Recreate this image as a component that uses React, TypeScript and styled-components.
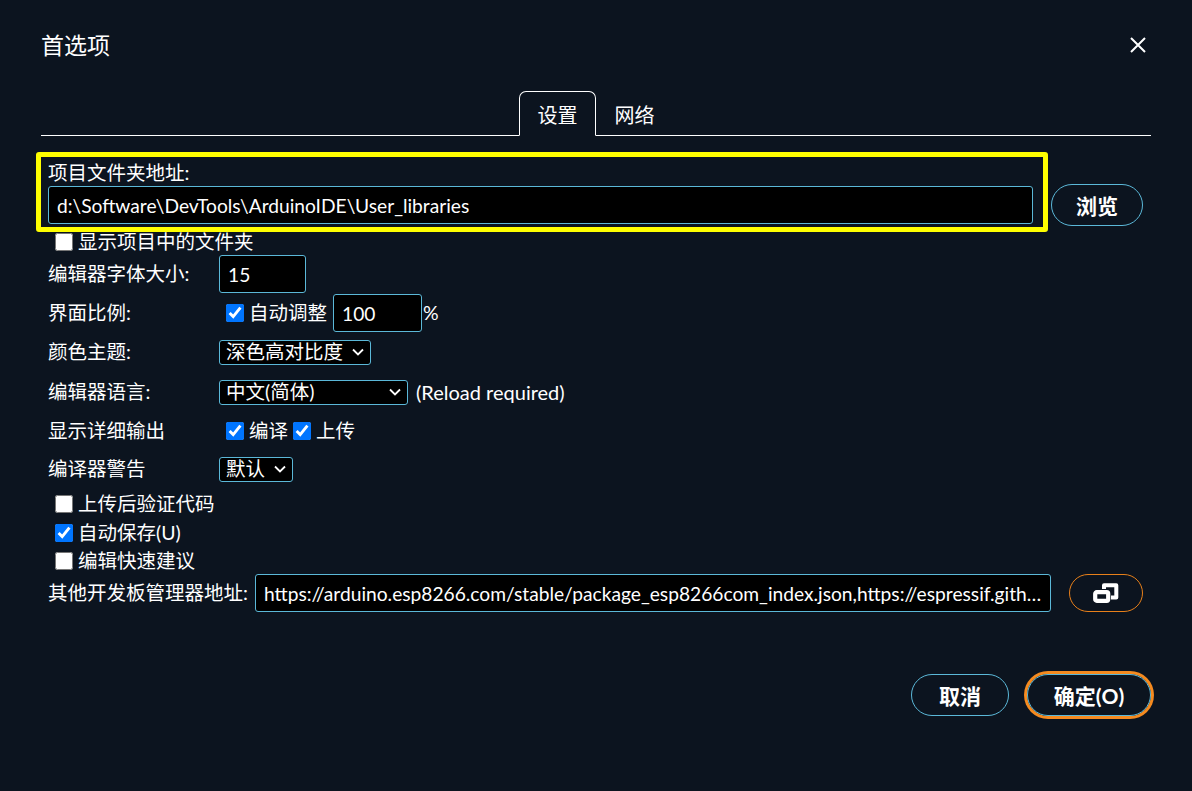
import React from "react";
import styled, { createGlobalStyle } from "styled-components";

const Global = createGlobalStyle`
  html, body { margin: 0; padding: 0; background: #0c141f; }
  body { width: 1192px; height: 791px; overflow: hidden; }
  * { box-sizing: border-box; }
`;
const FONT = `Lato, "Noto Sans CJK SC", sans-serif`;
const CYAN = "#5bb8d8";

const Dialog = styled.div`
  width: 1192px; height: 791px; padding: 26px 41px 0; color: #fff;
  font: 19.5px/24px ${FONT}; background: #0c141f; display: flex; flex-direction: column;
`;
const Header = styled.div`
  display: flex; justify-content: space-between; align-items: center; height: 38px; padding-right: 3px;
`;
const Title = styled.div`font-size: 23px; line-height: 38px;`;
const Close = styled.svg`width: 18px; height: 18px; stroke: #fff; stroke-width: 2; fill: none; margin-right: 1px;`;
const Tabs = styled.div`
  display: flex; justify-content: center; align-items: flex-end; height: 46px; margin-top: 26px; border-bottom: 1px solid #fff;
  width: 1110px;
`;
const Tab = styled.div<{ $active?: boolean }>`
  width: 77px; height: 45px; margin-bottom: -1px; padding-top: 2px; display: flex; align-items: center; justify-content: center; font-size: 20px;
  ${p => p.$active ? `border: 1px solid #fff; border-bottom: 1px solid #0c141f; border-radius: 7px 7px 0 0;` : ""}
`;
const PathRow = styled.div`display: flex; align-items: flex-end; margin: 16px 0 0 -5px; gap: 3px;`;
const Highlight = styled.div`
  width: 1012px; height: 80px; border: 5px solid #ffff00; border-radius: 3px; padding: 3px 10px 0 7px;
`;
const Label = styled.div`line-height: 26px; white-space: nowrap;`;
const TextInput = styled.input<{ $w?: string; $h?: string }>`
  display: block; width: ${p => p.$w || "100%"}; height: ${p => p.$h || "38px"};
  background: #000; color: #fff; border: 1px solid ${CYAN}; border-radius: 3px;
  font: 19.2px ${FONT}; padding: 0 8px; outline: none; text-overflow: ellipsis;
`;
const Pill = styled.button<{ $w: string; $h?: string; $color?: string }>`
  width: ${p => p.$w}; height: ${p => p.$h || "42px"}; border-radius: 22px; background: transparent;
  border: 1px solid ${p => p.$color || CYAN}; color: #fff; font: 700 21px ${FONT};
  display: flex; align-items: center; justify-content: center; padding: 0; flex: none;
`;
const BrowsePill = styled(Pill)`margin-bottom: 6px;`;
const CopyPill = styled(Pill)`margin-left: 18px;`;
const OkPill = styled(Pill)`box-shadow: 0 0 0 3px #f58a1f;`;
const Form = styled.div`display: flex; flex-direction: column; padding-left: 7px;`;
const Row = styled.div<{ $h: number; $top?: number }>`
  display: grid; grid-template-columns: 171px 1fr; align-items: center; height: ${p => p.$h}px; margin-top: ${p => p.$top || 0}px;
`;
const Controls = styled.div`display: flex; align-items: center; gap: 5px;`;
const CheckLine = styled.label<{ $h: number; $top?: number }>`
  display: flex; align-items: center; gap: 5px; height: ${p => p.$h}px; padding-left: 7px; margin-top: ${p => p.$top || 0}px;
`;
const Check = styled.input.attrs({ type: "checkbox", readOnly: true })`
  width: 18px; height: 18px; margin: 0; accent-color: #0075ff; flex: none;
`;
const Boxed = styled.label`display: flex; align-items: center; gap: 5px; margin-left: 7px;`;
const ScaleBox = styled(Boxed)`width: 102px;`;
const InlineBox = styled.label`display: flex; align-items: center; gap: 5px;`;
const Percent = styled.span`margin-left: -4px;`;
const SelectBox = styled.div<{ $w: string }>`
  width: ${p => p.$w}; height: 25px; background: #000; border: 1px solid ${CYAN}; border-radius: 3px;
  display: flex; align-items: center; justify-content: space-between; padding: 0 6px; white-space: nowrap;
`;
const Chevron = styled.svg`width: 12px; height: 8px; stroke: #fff; stroke-width: 1.8; fill: none; flex: none;`;
const Hint = styled.span`margin-left: 3px; font-size: 20px;`;
const UrlRow = styled.div`display: flex; align-items: center; height: 38px; margin-top: -1px;`;
const UrlLabel = styled.div`width: 207px; white-space: nowrap; flex: none;`;
const Footer = styled.div`
  display: flex; justify-content: flex-end; gap: 18px; margin-top: 62px; width: 1110px;
`;

const Chev = () => (
  <Chevron viewBox="0 0 12 8"><path d="M1 1.5 L6 6.5 L11 1.5" /></Chevron>
);

const Sel = ({ w, text }: { w: string; text: string }) => (
  <SelectBox $w={w}><span>{text}</span><Chev /></SelectBox>
);

export default function App() {
  return (
    <Dialog>
      <Global />
      <Header>
        <Title>首选项</Title>
        <Close viewBox="0 0 18 18"><path d="M2 2 L16 16 M16 2 L2 16" /></Close>
      </Header>
      <Tabs>
        <Tab $active>设置</Tab>
        <Tab>网络</Tab>
      </Tabs>
      <PathRow>
        <Highlight>
          <Label>项目文件夹地址:</Label>
          <TextInput readOnly value="d:\Software\DevTools\ArduinoIDE\User_libraries" />
        </Highlight>
        <BrowsePill $w="92px">浏览</BrowsePill>
      </PathRow>
      <Form>
        <CheckLine $h={20}><Check /><span>显示项目中的文件夹</span></CheckLine>
        <Row $h={38} $top={3}>
          <span>编辑器字体大小:</span>
          <TextInput readOnly value="15" $w="87px" />
        </Row>
        <Row $h={38} $top={1}>
          <span>界面比例:</span>
          <Controls>
            <ScaleBox><Check defaultChecked /><span>自动调整</span></ScaleBox>
            <TextInput readOnly value="100" $w="89px" />
            <Percent>%</Percent>
          </Controls>
        </Row>
        <Row $h={38} $top={1}>
          <span>颜色主题:</span>
          <Controls><Sel w="152px" text="深色高对比度" /></Controls>
        </Row>
        <Row $h={38} $top={2}>
          <span>编辑器语言:</span>
          <Controls>
            <Sel w="189px" text="中文(简体)" />
            <Hint>(Reload required)</Hint>
          </Controls>
        </Row>
        <Row $h={38} $top={1}>
          <span>显示详细输出</span>
          <Controls>
            <Boxed><Check defaultChecked /><span>编译</span></Boxed>
            <InlineBox><Check defaultChecked /><span>上传</span></InlineBox>
          </Controls>
        </Row>
        <Row $h={38}>
          <span>编译器警告</span>
          <Controls><Sel w="74px" text="默认" /></Controls>
        </Row>
        <CheckLine $h={28} $top={2}><Check /><span>上传后验证代码</span></CheckLine>
        <CheckLine $h={28} $top={1}><Check defaultChecked /><span>自动保存(U)</span></CheckLine>
        <CheckLine $h={28}><Check /><span>编辑快速建议</span></CheckLine>
        <UrlRow>
          <UrlLabel>其他开发板管理器地址:</UrlLabel>
          <TextInput readOnly $w="796px" value="https://arduino.esp8266.com/stable/package_esp8266com_index.json,https://espressif.github.io/arduino-esp32/package_esp32_index.json" />
          <CopyPill $w="74px" $h="38px" $color="#e8801a">
            <svg width="26" height="20" viewBox="0 0 26 20" fill="none" stroke="#fff" strokeLinejoin="round">
              <path d="M11 6V2.2h12.3v12.3H18" strokeWidth="4" />
              <rect x="2.2" y="9.2" width="13" height="8.6" rx="1.5" strokeWidth="4.2" />
            </svg>
          </CopyPill>
        </UrlRow>
      </Form>
      <Footer>
        <Pill $w="98px">取消</Pill>
        <OkPill $w="124px">确定(O)</OkPill>
      </Footer>
    </Dialog>
  );
}
